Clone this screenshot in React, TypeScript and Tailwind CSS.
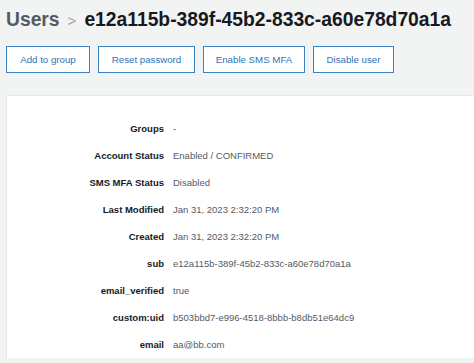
import React from 'react';

const ACTIONS: { label: string; width: string }[] = [
    { label: 'Add to group', width: 'w-[84px]' },
    { label: 'Reset password', width: 'w-[97px]' },
    { label: 'Enable SMS MFA', width: 'w-[102px]' },
    { label: 'Disable user', width: 'w-[81px]' },
];

const ATTRIBUTES: [string, string][] = [
    ['Groups', '-'],
    ['Account Status', 'Enabled / CONFIRMED'],
    ['SMS MFA Status', 'Disabled'],
    ['Last Modified', 'Jan 31, 2023 2:32:20 PM'],
    ['Created', 'Jan 31, 2023 2:32:20 PM'],
    ['sub', 'e12a115b-389f-45b2-833c-a60e78d70a1a'],
    ['email_verified', 'true'],
    ['custom:uid', 'b503bbd7-e996-4518-8bbb-b8db51e64dc9'],
    ['email', 'aa@bb.com'],
];

const App: React.FC = () => {
    return (
        <div
            className="w-[474px] h-[363px] overflow-hidden bg-[#f2f3f3]"
            style={{ fontFamily: '"Liberation Sans", Arial, sans-serif' }}
        >
            <h1 className="flex items-center h-[24px] mt-[8px] pl-[6px] text-[19.3px] font-bold leading-none whitespace-nowrap">
                <span className="text-[#545b64]">Users</span>
                <span className="mx-[8px] text-[#9aa3a8] font-normal text-[15px]">&gt;</span>
                <span className="text-[#16191f]">e12a115b-389f-45b2-833c-a60e78d70a1a</span>
            </h1>

            <div className="flex gap-[8px] pl-[6px] mt-[14px]">
                {ACTIONS.map(({ label, width }) => (
                    <button
                        key={label}
                        type="button"
                        className={`${width} h-[27px] bg-white border border-[#3a82c0] text-[#2e74b6] text-[9.7px] leading-none whitespace-nowrap`}
                    >
                        {label}
                    </button>
                ))}
            </div>

            <div className="mt-[22px] ml-[6px] bg-white border-l border-t border-[#e6e8e8] pt-[19px]">
                {ATTRIBUTES.map(([key, value]) => (
                    <div key={key} className="flex items-center h-[27px] text-[9.5px] leading-none">
                        <div className="w-[157px] text-right font-bold text-[#16191f]">{key}</div>
                        <div className="ml-[9px] text-[#545b64]">{value}</div>
                    </div>
                ))}
            </div>
        </div>
    );
};

export default App;
